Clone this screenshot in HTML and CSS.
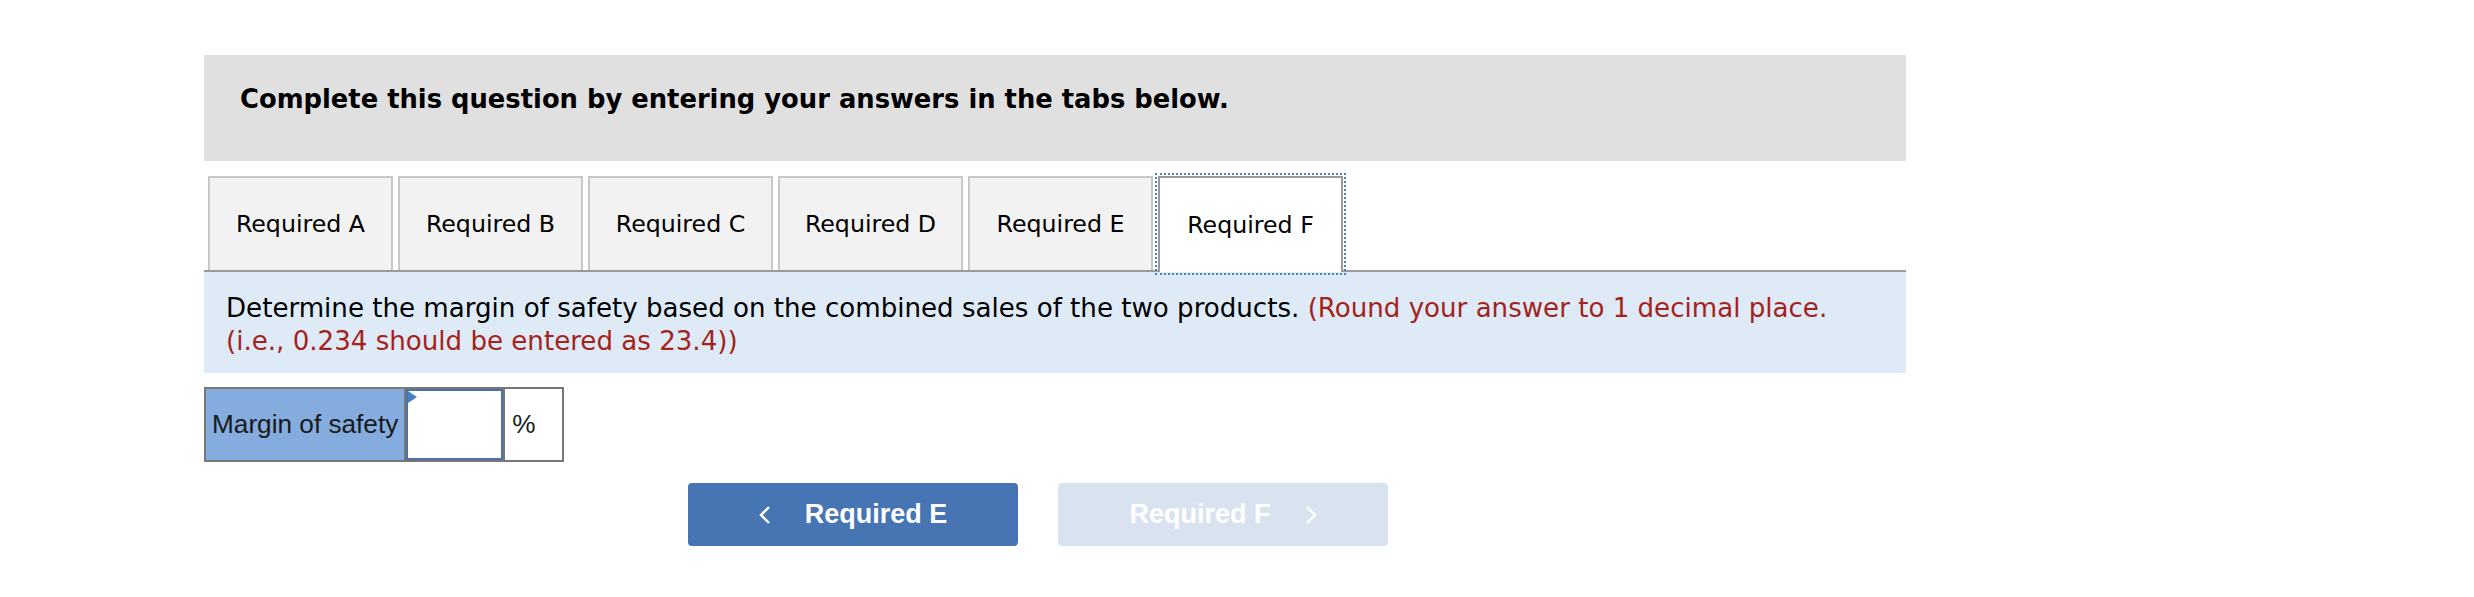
FILE: index.html
```html
<!DOCTYPE html>
<html>
<head>
<meta charset="utf-8">
<link rel="stylesheet" href="styles.css">
</head>
<body>
<div class="page">
  <div class="header">Complete this question by entering your answers in the tabs below.</div>
  <div class="tabs">
    <div class="tab">Required A</div>
    <div class="tab">Required B</div>
    <div class="tab">Required C</div>
    <div class="tab">Required D</div>
    <div class="tab">Required E</div>
    <div class="tab active">Required F</div>
  </div>
  <div class="instructions">Determine the margin of safety based on the combined sales of the two products. <span class="red">(Round your answer to 1 decimal place.</span> <span class="red">(i.e., 0.234 should be entered as 23.4))</span></div>
  <table class="answer">
    <tr>
      <td class="label">Margin of safety</td>
      <td class="inputcell"><div class="inputbox"><span class="marker"></span></div></td>
      <td class="unit">%</td>
    </tr>
  </table>
  <div class="nav">
    <div class="btn prev">
      <svg class="chev" width="12" height="18" viewBox="0 0 12 18"><polyline points="10,1 2,9 10,17" fill="none" stroke="#fff" stroke-width="2.4"/></svg>
      <span>Required E</span>
    </div>
    <div class="btn next">
      <span>Required F</span>
      <svg class="chev" width="12" height="18" viewBox="0 0 12 18"><polyline points="2,1 10,9 2,17" fill="none" stroke="#fff" stroke-width="2.4"/></svg>
    </div>
  </div>
</div>
</body>
</html>
```
FILE: styles.css
```css
body {
  margin: 0;
  background: #fff;
  font-family: "DejaVu Sans", Verdana, sans-serif;
  color: #000;
}
.page {
  margin: 55px 0 0 204px;
  width: 1702px;
}
.header {
  box-sizing: border-box;
  height: 106px;
  background: #e0e0e0;
  padding: 28px 0 0 36px;
  font-weight: bold;
  font-size: 25.8px;
  line-height: 32px;
}
.tabs {
  display: flex;
  gap: 5px;
  padding: 15px 0 0 4px;
  border-bottom: 2px solid #9a9a9a;
  height: 94px;
}
.tab {
  box-sizing: border-box;
  width: 185px;
  height: 94px;
  border: 2px solid #c8c8c8;
  border-bottom: none;
  background: #f2f2f2;
  display: flex;
  align-items: center;
  justify-content: center;
  font-size: 23.7px;
}
.tab.active {
  height: 96px;
  background: #fff;
  border-color: #999;
  outline: 2px dotted #4a7fc4;
  outline-offset: 1px;
  position: relative;
}
.instructions {
  background: #deebf7;
  padding: 20px 22px 15px 22px;
  font-size: 26.1px;
  line-height: 33px;
}
.red {
  color: #a3231c;
}
.answer {
  margin-top: 14px;
  border-collapse: collapse;
  border: 2px solid #777;
  font-family: "Liberation Sans", Arial, sans-serif;
  font-size: 26.2px;
  color: #1a1a1a;
}
.answer td {
  border: 2px solid #777;
  height: 71px;
  padding: 0;
}
.label {
  background: #84acdf;
  padding: 0 6px 0 6px !important;
}
.inputcell {
  width: 97px;
  background: #fff;
}
.inputbox {
  position: relative;
  box-sizing: border-box;
  width: 97px;
  height: 71px;
  border: 2px solid #4a72a8;
  background: #fff;
}
.marker {
  position: absolute;
  left: 0;
  top: 0;
  width: 0;
  height: 0;
  border-top: 6px solid transparent;
  border-bottom: 6px solid transparent;
  border-left: 9px solid #4a7fc1;
}
.unit {
  width: 50px;
  padding-left: 7px !important;
  background: #fff;
}
.nav {
  display: flex;
  gap: 40px;
  margin-top: 21px;
  padding-left: 484px;
}
.btn {
  box-sizing: border-box;
  width: 330px;
  height: 63px;
  border-radius: 4px;
  display: flex;
  align-items: center;
  justify-content: center;
  gap: 34px;
  color: #fff;
  font-family: "Liberation Sans", Arial, sans-serif;
  font-weight: bold;
  font-size: 27px;
}
.btn.prev {
  background: #4775b4;
}
.btn.next {
  background: #d9e3ef;
}
.chev {
  display: block;
}
```
